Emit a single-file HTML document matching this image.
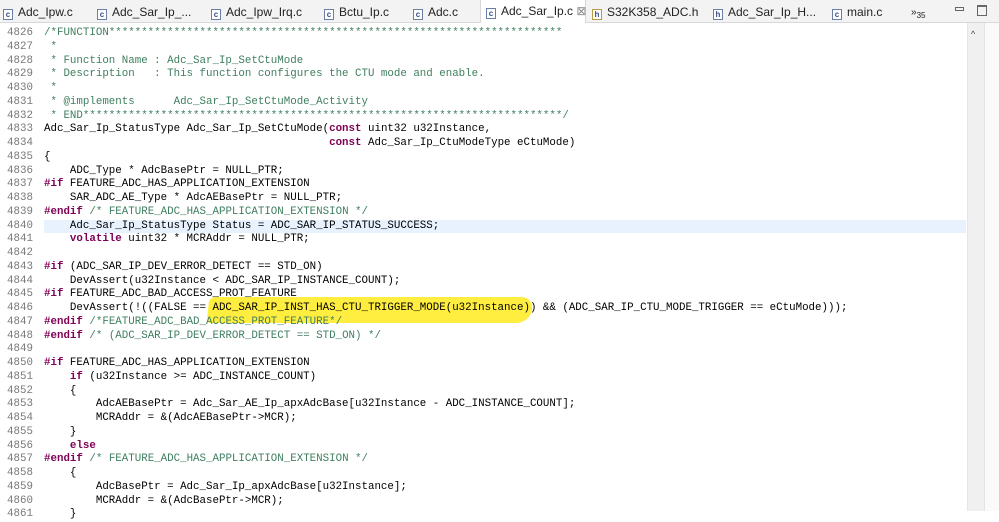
<!DOCTYPE html>
<html><head><meta charset="utf-8"><style>
*{margin:0;padding:0;box-sizing:border-box}
body{width:999px;height:511px;overflow:hidden;background:#fff;position:relative;font-family:"Liberation Sans",sans-serif}
#tabs{position:absolute;left:0;top:0;width:999px;height:23px;background:#f3f3f3;border-bottom:1px solid #d8d8d8;z-index:2}
.tab{position:absolute;top:1px;height:23px;font-size:12px;color:#222;line-height:23px;white-space:nowrap}
.ic{display:inline-block;width:10px;height:11px;border:1px solid #6a7fa8;font-size:8px;line-height:9px;text-align:center;color:#3a4f8a;margin-right:5px;vertical-align:-1px;background:#fff;font-weight:bold}
.act{background:#fff;border-right:1px solid #d8d8d8;border-left:1px solid #d8d8d8;height:23px;top:0}
#code{position:absolute;left:0;top:27px;width:966px;font-family:"Liberation Mono",monospace;font-size:10.8px;line-height:13.75px;color:#000}
.l{height:13.75px;position:relative;white-space:pre}
.n{display:inline-block;width:44px;padding-left:7px;color:#787878}
.k{color:#7f0055;font-weight:bold}
.c{color:#3f7f5f}
.hl{background:#e8f2fe}
#hy{position:absolute;left:208px;top:297px;width:324px;height:26px;background:#ffee40;border-radius:6px 12px 14px 4px;transform:skewX(-6deg)}
#sb{position:absolute;left:967px;top:23px;width:17px;height:488px;background:#f0f0f0;border-left:1px solid #e6e6e6}
#rb{position:absolute;left:984px;top:23px;width:15px;height:488px;background:#fafafa;border-left:1px solid #e4e4e4}
</style></head><body>
<div id="hy"></div>
<div id="code">
<div class="l"><span class="n">4826</span><span class="c">/*FUNCTION**********************************************************************</span></div>
<div class="l"><span class="n">4827</span><span class="c"> *</span></div>
<div class="l"><span class="n">4828</span><span class="c"> * Function Name : Adc_Sar_Ip_SetCtuMode</span></div>
<div class="l"><span class="n">4829</span><span class="c"> * Description   : This function configures the CTU mode and enable.</span></div>
<div class="l"><span class="n">4830</span><span class="c"> *</span></div>
<div class="l"><span class="n">4831</span><span class="c"> * @implements      Adc_Sar_Ip_SetCtuMode_Activity</span></div>
<div class="l"><span class="n">4832</span><span class="c"> * END**************************************************************************/</span></div>
<div class="l"><span class="n">4833</span>Adc_Sar_Ip_StatusType Adc_Sar_Ip_SetCtuMode(<span class="k">const</span> uint32 u32Instance,</div>
<div class="l"><span class="n">4834</span>                                            <span class="k">const</span> Adc_Sar_Ip_CtuModeType eCtuMode)</div>
<div class="l"><span class="n">4835</span>{</div>
<div class="l"><span class="n">4836</span>    ADC_Type * AdcBasePtr = NULL_PTR;</div>
<div class="l"><span class="n">4837</span><span class="k">#if</span> FEATURE_ADC_HAS_APPLICATION_EXTENSION</div>
<div class="l"><span class="n">4838</span>    SAR_ADC_AE_Type * AdcAEBasePtr = NULL_PTR;</div>
<div class="l"><span class="n">4839</span><span class="k">#endif</span> <span class="c">/* FEATURE_ADC_HAS_APPLICATION_EXTENSION */</span></div>
<div class="l"><span class="n">4840</span><span class="hl" style="display:inline-block;width:922px">    Adc_Sar_Ip_StatusType Status = ADC_SAR_IP_STATUS_SUCCESS;</span></div>
<div class="l"><span class="n">4841</span>    <span class="k">volatile</span> uint32 * MCRAddr = NULL_PTR;</div>
<div class="l"><span class="n">4842</span></div>
<div class="l"><span class="n">4843</span><span class="k">#if</span> (ADC_SAR_IP_DEV_ERROR_DETECT == STD_ON)</div>
<div class="l"><span class="n">4844</span>    DevAssert(u32Instance &lt; ADC_SAR_IP_INSTANCE_COUNT);</div>
<div class="l"><span class="n">4845</span><span class="k">#if</span> FEATURE_ADC_BAD_ACCESS_PROT_FEATURE</div>
<div class="l"><span class="n">4846</span>    DevAssert(!((FALSE == ADC_SAR_IP_INST_HAS_CTU_TRIGGER_MODE(u32Instance)) &amp;&amp; (ADC_SAR_IP_CTU_MODE_TRIGGER == eCtuMode)));</div>
<div class="l"><span class="n">4847</span><span class="k">#endif</span> <span class="c">/*FEATURE_ADC_BAD_ACCESS_PROT_FEATURE*/</span></div>
<div class="l"><span class="n">4848</span><span class="k">#endif</span> <span class="c">/* (ADC_SAR_IP_DEV_ERROR_DETECT == STD_ON) */</span></div>
<div class="l"><span class="n">4849</span></div>
<div class="l"><span class="n">4850</span><span class="k">#if</span> FEATURE_ADC_HAS_APPLICATION_EXTENSION</div>
<div class="l"><span class="n">4851</span>    <span class="k">if</span> (u32Instance &gt;= ADC_INSTANCE_COUNT)</div>
<div class="l"><span class="n">4852</span>    {</div>
<div class="l"><span class="n">4853</span>        AdcAEBasePtr = Adc_Sar_AE_Ip_apxAdcBase[u32Instance - ADC_INSTANCE_COUNT];</div>
<div class="l"><span class="n">4854</span>        MCRAddr = &amp;(AdcAEBasePtr-&gt;MCR);</div>
<div class="l"><span class="n">4855</span>    }</div>
<div class="l"><span class="n">4856</span>    <span class="k">else</span></div>
<div class="l"><span class="n">4857</span><span class="k">#endif</span> <span class="c">/* FEATURE_ADC_HAS_APPLICATION_EXTENSION */</span></div>
<div class="l"><span class="n">4858</span>    {</div>
<div class="l"><span class="n">4859</span>        AdcBasePtr = Adc_Sar_Ip_apxAdcBase[u32Instance];</div>
<div class="l"><span class="n">4860</span>        MCRAddr = &amp;(AdcBasePtr-&gt;MCR);</div>
<div class="l"><span class="n">4861</span>    }</div>
</div>
<div id="tabs">
<div class="tab" style="left:3px"><span class="ic">c</span>Adc_Ipw.c</div>
<div class="tab" style="left:97px"><span class="ic">c</span>Adc_Sar_Ip_...</div>
<div class="tab" style="left:211px"><span class="ic">c</span>Adc_Ipw_Irq.c</div>
<div class="tab" style="left:324px"><span class="ic">c</span>Bctu_Ip.c</div>
<div class="tab" style="left:413px"><span class="ic">c</span>Adc.c</div>
<div class="tab act" style="left:480px;width:106px;padding-left:5px"><span class="ic">c</span>Adc_Sar_Ip.c <span style="color:#888">⊠</span></div>
<div class="tab" style="left:592px"><span class="ic" style="border-color:#b89a40">h</span>S32K358_ADC.h</div>
<div class="tab" style="left:713px"><span class="ic">h</span>Adc_Sar_Ip_H...</div>
<div class="tab" style="left:832px"><span class="ic">c</span>main.c</div>
<div class="tab" style="left:911px;font-size:10px">»<sub style="font-size:8px">35</sub></div>
<div style="position:absolute;left:955px;top:7px;width:9px;height:4px;border:1px solid #666"></div>
<div style="position:absolute;left:977px;top:5px;width:10px;height:11px;border:1px solid #666;border-top-width:2px"></div>
</div>
<div id="sb"><div style="position:absolute;left:3px;top:6px;font-size:9px;color:#444;font-family:'Liberation Sans'">^</div></div>
<div id="rb"></div>
</body></html>
